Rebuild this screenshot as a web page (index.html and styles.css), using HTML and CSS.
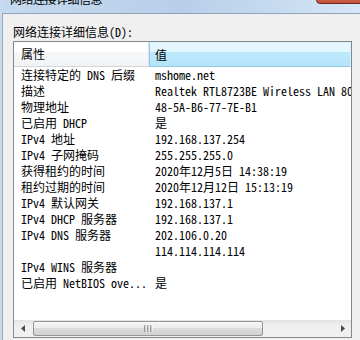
FILE: index.html
```html
<!DOCTYPE html>
<html lang="zh-CN">
<head>
<meta charset="utf-8">
<title>网络连接详细信息</title>
<link rel="stylesheet" href="styles.css">
</head>
<body>
<div class="win">
  <div class="titlebar">
    <span class="title">网络连接详细信息</span>
    <span class="close"></span>
  </div>
  <div class="body">
    <div class="label">网络连接详细信息(D):</div>
    <div class="list">
      <div class="head">
        <div class="hc h1">属性</div>
        <div class="hc h2">值</div>
      </div>
      <div class="rows">
        <div class="row"><div class="k">连接特定的 DNS 后缀</div><div class="v">mshome.net</div></div>
        <div class="row"><div class="k">描述</div><div class="v">Realtek RTL8723BE Wireless LAN 802.11n PCI-E NIC</div></div>
        <div class="row"><div class="k">物理地址</div><div class="v">48-5A-B6-77-7E-B1</div></div>
        <div class="row"><div class="k">已启用 DHCP</div><div class="v">是</div></div>
        <div class="row"><div class="k">IPv4 地址</div><div class="v">192.168.137.254</div></div>
        <div class="row"><div class="k">IPv4 子网掩码</div><div class="v">255.255.255.0</div></div>
        <div class="row"><div class="k">获得租约的时间</div><div class="v">2020年12月5日 14:38:19</div></div>
        <div class="row"><div class="k">租约过期的时间</div><div class="v">2020年12月12日 15:13:19</div></div>
        <div class="row"><div class="k">IPv4 默认网关</div><div class="v">192.168.137.1</div></div>
        <div class="row"><div class="k">IPv4 DHCP 服务器</div><div class="v">192.168.137.1</div></div>
        <div class="row"><div class="k">IPv4 DNS 服务器</div><div class="v">202.106.0.20</div></div>
        <div class="row"><div class="k"></div><div class="v">114.114.114.114</div></div>
        <div class="row"><div class="k">IPv4 WINS 服务器</div><div class="v"></div></div>
        <div class="row"><div class="k">已启用 NetBIOS ove...</div><div class="v">是</div></div>
      </div>
      <div class="hs">
        <div class="btn"><svg width="4" height="7" viewBox="0 0 4 7"><path d="M4 0 L0 3.5 L4 7 Z" fill="#4a4a4a"/></svg></div>
        <div class="track">
          <div class="thumb"><svg width="9" height="7" viewBox="0 0 9 7"><path d="M1 0v7M4 0v7M7 0v7" stroke="#555" stroke-width="1"/><path d="M2 0v7M5 0v7M8 0v7" stroke="#fff" stroke-width="1"/></svg></div>
        </div>
        <div class="btn"><svg width="4" height="7" viewBox="0 0 4 7"><path d="M0 0 L4 3.5 L0 7 Z" fill="#4a4a4a"/></svg></div>
      </div>
    </div>
  </div>
</div>
</body>
</html>
```
FILE: styles.css
```css
html, body {
  margin: 0;
  padding: 0;
}
body {
  width: 360px;
  height: 340px;
  overflow: hidden;
  background: #f0f0f0;
  font-family: "Noto Sans Mono CJK SC", "Noto Sans CJK SC", monospace;
  font-size: 12px;
  color: #000;
}
.win {
  height: 340px;
  display: flex;
  flex-direction: column;
  border-left: 2px solid #c8dbef;
}
.titlebar {
  height: 13px;
  border-bottom: 1px solid #8fa3bc;
  background: linear-gradient(90deg, #c6daef 0%, #b7cfe9 50%, #c2d8ee 70%, #d6e6f6 100%);
  display: flex;
  align-items: flex-start;
  overflow: visible;
}
.title {
  margin: -7px 0 0 8px;
  line-height: 12px;
  font-size: 12px;
  letter-spacing: -0.5px;
  font-family: "Noto Sans CJK SC", sans-serif;
}
.close {
  margin-left: auto;
  margin-right: -6px;
  margin-top: -14px;
  width: 50px;
  height: 18px;
  box-sizing: border-box;
  border: 1px solid #6b2a1e;
  border-radius: 0 0 0 4px;
  background: linear-gradient(#e9a38c, #d06a50 60%, #c4513a);
}
.body {
  flex: 1;
  display: flex;
  flex-direction: column;
  border-left: 1px solid #9aa9bc;
  padding: 10px 0 0 10px;
}
.label {
  line-height: 16px;
  height: 16px;
  margin-bottom: 1px;
  white-space: nowrap;
}
.list {
  width: 337px;
  height: 295px;
  border: 1px solid #828790;
  background: #fff;
  display: flex;
  flex-direction: column;
}
.head {
  display: flex;
  height: 25px;
}
.hc {
  box-sizing: border-box;
  height: 25px;
  line-height: 24px;
  white-space: nowrap;
}
.h1 {
  width: 135px;
  padding-left: 7px;
  background: linear-gradient(#ffffff, #ffffff 42%, #f7f8fa 42%, #f1f2f4);
  border-right: 1px solid #e0e4ea;
  border-bottom: 1px solid #d5d5d5;
}
.h2 {
  width: 202px;
  padding-left: 5px;
  background: linear-gradient(#e6f8ff, #e1f6ff 40%, #bde9fc 40%, #b4e4fa);
  border: 1px solid #93c9e3;
  border-top-color: #d8f1fb;
  border-right-color: #d8f1fb;
}
.rows {
  flex: 1;
  display: flex;
  flex-direction: column;
}
.row {
  display: flex;
  height: 16px;
  line-height: 16px;
}
.k, .v {
  box-sizing: border-box;
  white-space: nowrap;
  overflow: hidden;
}
.k {
  width: 135px;
  padding-left: 7px;
}
.v {
  width: 202px;
  padding-left: 6px;
}
.hs {
  height: 17px;
  display: flex;
  background: linear-gradient(#e3e3e3, #efefef 30%, #f0f0f0);
}
.btn {
  width: 17px;
  display: flex;
  align-items: center;
  justify-content: center;
}
.track {
  flex: 1;
  display: flex;
  padding: 1px 0 1px 2px;
}
.thumb {
  width: 230px;
  box-sizing: border-box;
  border: 1px solid #979797;
  border-radius: 2px;
  background: linear-gradient(#f6f6f6, #ececec 45%, #dcdcdc 50%, #d2d2d2);
  display: flex;
  align-items: center;
  justify-content: center;
}
```
